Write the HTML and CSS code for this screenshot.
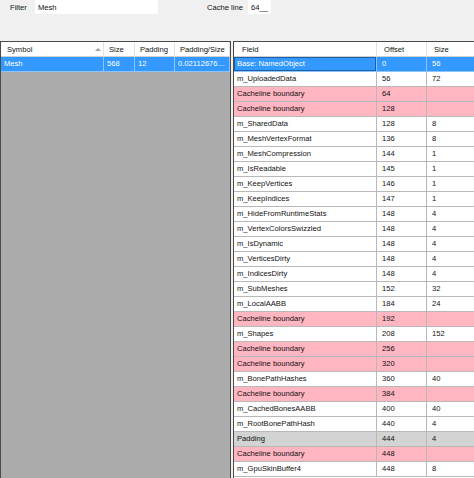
FILE: index.html
```
<!DOCTYPE html>
<html>
<head>
<meta charset="utf-8">
<link rel="stylesheet" href="styles.css">
</head>
<body>
<div class="toolbar">
  <span class="label filter-label">Filter</span>
  <div class="textbox filter-box">Mesh</div>
  <span class="label cache-label">Cache line</span>
  <div class="textbox cache-box">64__</div>
</div>
<div class="panels">
  <div class="grid left">
    <div class="row head">
      <div class="cell">Symbol<span class="sort"></span></div>
      <div class="cell">Size</div>
      <div class="cell">Padding</div>
      <div class="cell">Padding/Size</div>
    </div>
    <div class="row sel">
      <div class="cell">Mesh</div>
      <div class="cell">568</div>
      <div class="cell">12</div>
      <div class="cell">0.02112676056338</div>
    </div>
  </div>
  <div class="grid right">
    <div class="row head"><div class="cell">Field</div><div class="cell">Offset</div><div class="cell">Size</div></div>
    <div class="row sel"><div class="cell focus">Base: NamedObject</div><div class="cell">0</div><div class="cell">56</div></div>
    <div class="row"><div class="cell">m_UploadedData</div><div class="cell">56</div><div class="cell">72</div></div>
    <div class="row cl"><div class="cell">Cacheline boundary</div><div class="cell">64</div><div class="cell"></div></div>
    <div class="row cl"><div class="cell">Cacheline boundary</div><div class="cell">128</div><div class="cell"></div></div>
    <div class="row"><div class="cell">m_SharedData</div><div class="cell">128</div><div class="cell">8</div></div>
    <div class="row"><div class="cell">m_MeshVertexFormat</div><div class="cell">136</div><div class="cell">8</div></div>
    <div class="row"><div class="cell">m_MeshCompression</div><div class="cell">144</div><div class="cell">1</div></div>
    <div class="row"><div class="cell">m_IsReadable</div><div class="cell">145</div><div class="cell">1</div></div>
    <div class="row"><div class="cell">m_KeepVertices</div><div class="cell">146</div><div class="cell">1</div></div>
    <div class="row"><div class="cell">m_KeepIndices</div><div class="cell">147</div><div class="cell">1</div></div>
    <div class="row"><div class="cell">m_HideFromRuntimeStats</div><div class="cell">148</div><div class="cell">4</div></div>
    <div class="row"><div class="cell">m_VertexColorsSwizzled</div><div class="cell">148</div><div class="cell">4</div></div>
    <div class="row"><div class="cell">m_IsDynamic</div><div class="cell">148</div><div class="cell">4</div></div>
    <div class="row"><div class="cell">m_VerticesDirty</div><div class="cell">148</div><div class="cell">4</div></div>
    <div class="row"><div class="cell">m_IndicesDirty</div><div class="cell">148</div><div class="cell">4</div></div>
    <div class="row"><div class="cell">m_SubMeshes</div><div class="cell">152</div><div class="cell">32</div></div>
    <div class="row"><div class="cell">m_LocalAABB</div><div class="cell">184</div><div class="cell">24</div></div>
    <div class="row cl"><div class="cell">Cacheline boundary</div><div class="cell">192</div><div class="cell"></div></div>
    <div class="row"><div class="cell">m_Shapes</div><div class="cell">208</div><div class="cell">152</div></div>
    <div class="row cl"><div class="cell">Cacheline boundary</div><div class="cell">256</div><div class="cell"></div></div>
    <div class="row cl"><div class="cell">Cacheline boundary</div><div class="cell">320</div><div class="cell"></div></div>
    <div class="row"><div class="cell">m_BonePathHashes</div><div class="cell">360</div><div class="cell">40</div></div>
    <div class="row cl"><div class="cell">Cacheline boundary</div><div class="cell">384</div><div class="cell"></div></div>
    <div class="row"><div class="cell">m_CachedBonesAABB</div><div class="cell">400</div><div class="cell">40</div></div>
    <div class="row"><div class="cell">m_RootBonePathHash</div><div class="cell">440</div><div class="cell">4</div></div>
    <div class="row pad"><div class="cell">Padding</div><div class="cell">444</div><div class="cell">4</div></div>
    <div class="row cl"><div class="cell">Cacheline boundary</div><div class="cell">448</div><div class="cell"></div></div>
    <div class="row"><div class="cell">m_GpuSkinBuffer4</div><div class="cell">448</div><div class="cell">8</div></div>
  </div>
</div>
</body>
</html>
```
FILE: styles.css
```
html, body {
  margin: 0;
  padding: 0;
  background: #f0f0f0;
  overflow: hidden;
  height: 478px;
  font-family: "Liberation Sans", Arial, sans-serif;
  font-size: 7.6px;
  color: #111;
}
.toolbar {
  height: 41px;
  display: flex;
  align-items: flex-start;
}
.label {
  line-height: 15px;
  flex-shrink: 0;
}
.filter-label { margin-left: 10px; width: 25px; }
.textbox {
  flex-shrink: 0;
  background: #fff;
  height: 14px;
  line-height: 15px;
  padding-left: 3px;
  box-sizing: border-box;
}
.filter-box { width: 123px; }
.cache-label { margin-left: 49px; width: 41px; }
.cache-box { width: 23px; }
.panels {
  display: flex;
  gap: 2px;
  height: 437px;
}
.grid {
  flex-shrink: 0;
  background: #ababab;
  border: 1px solid #4a4a4a;
  border-right: none;
  border-bottom: none;
  overflow: hidden;
}
.left { width: 229px; border-right: 1px solid #4a4a4a; }
.right { width: 260px; background: #fff; }
.row {
  display: grid;
  height: 15px;
  background: #fff;
}
.left .row { grid-template-columns: 103px 31px 40px 55px; }
.right .row { grid-template-columns: 143px 50px 67px; }
.cell {
  border-right: 1px solid #b8b8b8;
  border-bottom: 1px solid #b8b8b8;
  line-height: 14px;
  padding-left: 3px;
  padding-right: 2px;
  white-space: nowrap;
  overflow: hidden;
  text-overflow: ellipsis;
  position: relative;
}
.right .row .cell:nth-child(n+2) { padding-left: 5px; }
.row.head .cell {
  padding-left: 6px;
  border-right: 1px solid #e2e2e2;
  border-bottom: 1px solid #d0d0d0;
  line-height: 15px;
}
.left .row.head .cell:nth-child(n+2) { padding-left: 5px; }
.right .row.head .cell:first-child { padding-left: 8px; }
.right .row.head .cell:nth-child(n+2) { padding-left: 7px; }
.sort {
  position: absolute;
  left: 94px;
  top: 6px;
  width: 0;
  height: 0;
  border-left: 3px solid transparent;
  border-right: 3px solid transparent;
  border-bottom: 3px solid #a0a0a0;
}
.row.sel { background: #3399ff; color: #fff; }
.row.sel .cell { border-right-color: #8cc4ff; border-bottom-color: #8cc4ff; }
.right .row.sel .cell.focus { box-shadow: inset 0 0 0 1px #1c5fa8; }
.row.cl { background: #ffb6c1; }
.row.pad { background: #d3d3d3; }
```
